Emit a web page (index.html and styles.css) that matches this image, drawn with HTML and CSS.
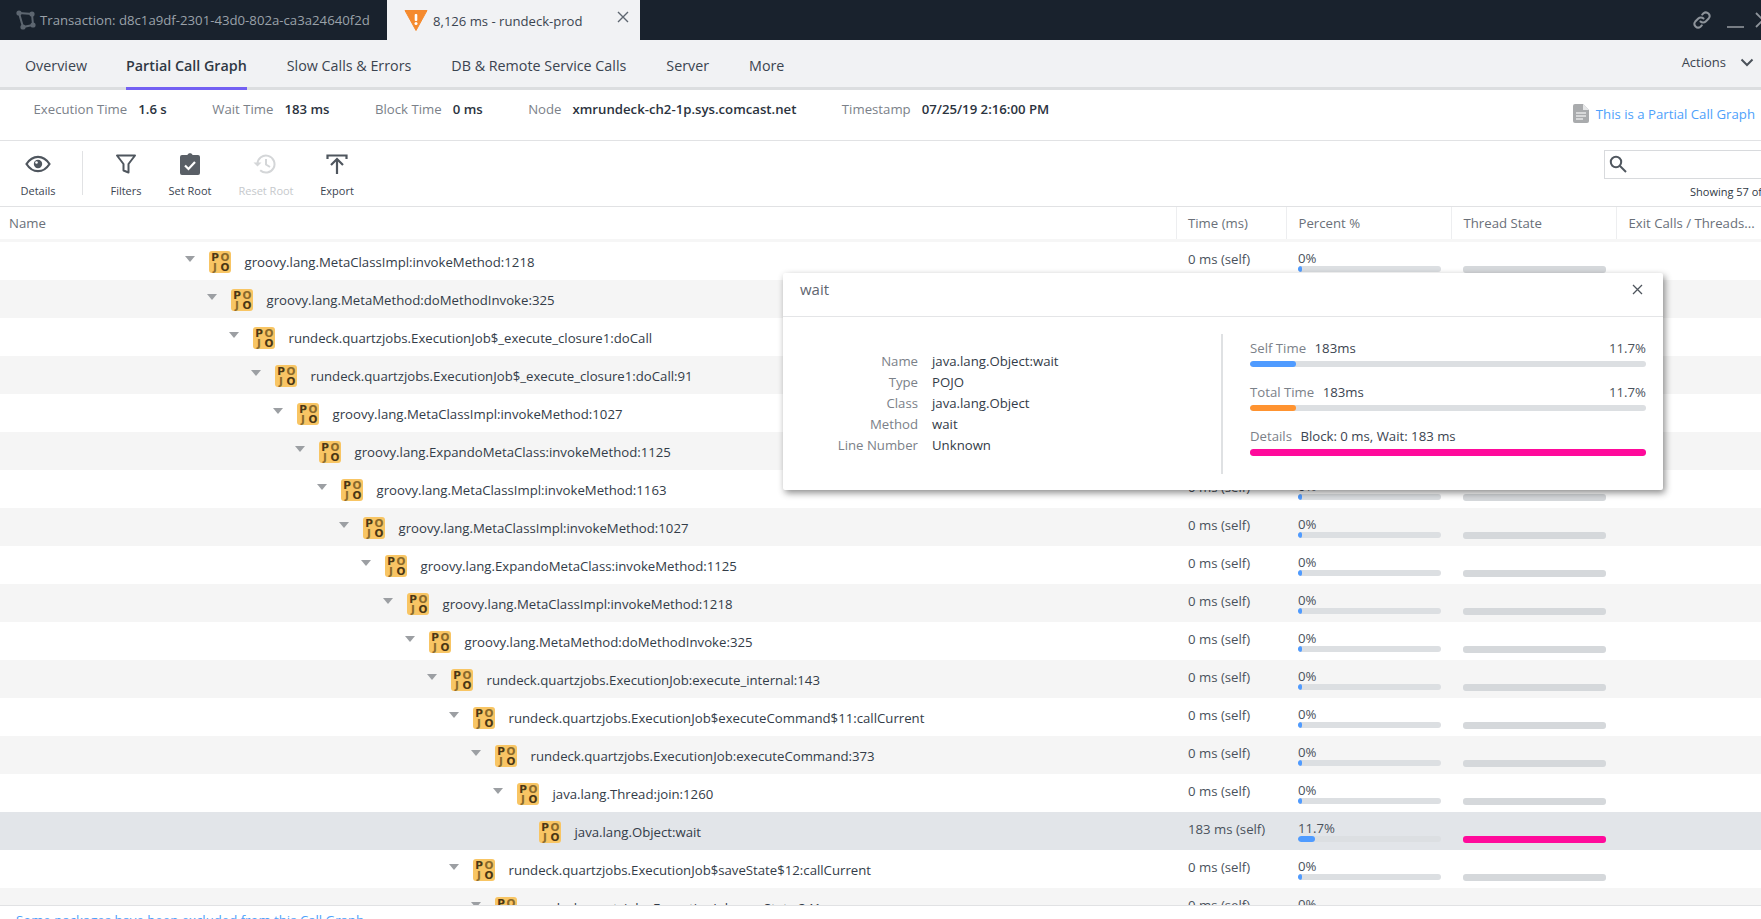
FILE: index.html
```html
<!DOCTYPE html>
<html lang="en">
<head>
<meta charset="utf-8">
<title>Partial Call Graph</title>
<link rel="stylesheet" href="styles.css">
</head>
<body>
<div class="page">
  <header class="tabbar">
    <div class="wintab">
      <svg class="tab-ico" width="20" height="20" viewBox="0 0 20 20"><path d="M3 3 16 4 17 15 7 17Z" fill="none" stroke="#5d6670" stroke-width="2"/><circle cx="3" cy="3" r="2.6" fill="#5d6670"/><circle cx="16" cy="4" r="2.6" fill="#5d6670"/><circle cx="17" cy="15" r="2.6" fill="#5d6670"/><circle cx="7" cy="17" r="2.6" fill="#5d6670"/></svg>
      <span>Transaction: d8c1a9df-2301-43d0-802a-ca3a24640f2d</span>
    </div>
    <div class="wintab active">
      <svg class="warn-ico" width="24" height="22" viewBox="0 0 24 22"><path d="M1 1.5H23L12 21.5Z" fill="#f58a2e" stroke="#f58a2e" stroke-linejoin="round"/><rect x="10.7" y="5" width="2.6" height="7" rx="1" fill="#fff"/><circle cx="12" cy="14.6" r="1.5" fill="#fff"/></svg>
      <span class="active-label">8,126 ms - rundeck-prod</span>
      <svg class="tab-close" width="12" height="12" viewBox="0 0 12 12"><path d="M1 1 11 11M11 1 1 11" stroke="#5e6670" stroke-width="1.4" fill="none"/></svg>
    </div>
    <div class="win-actions">
      <svg class="win-link" width="20" height="20" viewBox="0 0 20 20" fill="none" stroke="#8e949b" stroke-width="2" stroke-linecap="round"><path d="M8.5 11.5a3.6 3.6 0 0 0 5.2 0l3-3a3.7 3.7 0 0 0-5.2-5.2l-1.3 1.3"/><path d="M11.500 8.500a3.600 3.600 0 0 0-5.200 0l-3 3a3.700 3.700 0 0 0 5.200 5.200l1.300-1.300"/></svg>
      <span class="win-min"></span>
      <svg class="win-x" width="16" height="16" viewBox="0 0 16 16"><path d="M1 1 15 15M15 1 1 15" stroke="#8e949b" stroke-width="1.800" fill="none"/></svg>
    </div>
  </header>

  <nav class="nav">
    <a class="nav-item">Overview</a>
    <a class="nav-item current">Partial Call Graph</a>
    <a class="nav-item">Slow Calls &amp; Errors</a>
    <a class="nav-item">DB &amp; Remote Service Calls</a>
    <a class="nav-item">Server</a>
    <a class="nav-item">More</a>
    <div class="nav-actions">
      <span>Actions</span>
      <svg width="14" height="9" viewBox="0 0 14 9"><path d="M1.500 1.500 7 7l5.500-5.500" stroke="#4b525a" stroke-width="2" fill="none"/></svg>
    </div>
  </nav>

  <section class="info">
    <div class="pair"><span class="lbl">Execution Time</span><span class="val">1.6 s</span></div>
    <div class="pair"><span class="lbl">Wait Time</span><span class="val">183 ms</span></div>
    <div class="pair"><span class="lbl">Block Time</span><span class="val">0 ms</span></div>
    <div class="pair"><span class="lbl">Node</span><span class="val">xmrundeck-ch2-1p.sys.comcast.net</span></div>
    <div class="pair"><span class="lbl">Timestamp</span><span class="val">07/25/19 2:16:00 PM</span></div>
    <a class="partial">
      <svg width="16" height="19" viewBox="0 0 16 19"><path d="M2 0H10L16 6V17a2 2 0 0 1-2 2H2a2 2 0 0 1-2-2V2a2 2 0 0 1 2-2Z" fill="#a9abad"/><path d="M10 0V6H16Z" fill="#e6e7e8"/><path d="M3 9H13M3 12H13M3 15H10" stroke="#e6e7e8" stroke-width="1.400"/></svg>
      <span>This is a Partial Call Graph</span>
    </a>
  </section>

  <section class="toolbar">
    <div class="tool t-details">
      <svg width="26" height="20" viewBox="0 0 26 20" fill="none"><path d="M1.500 10C5 4.500 9 2.800 13 2.800S21 4.500 24.500 10C21 15.500 17 17.200 13 17.200S5 15.500 1.500 10Z" stroke="#4f565e" stroke-width="2.200"/><circle cx="13" cy="10" r="4.200" fill="#4f565e"/><circle cx="11.500" cy="8.500" r="1.300" fill="#fff"/></svg>
      <span>Details</span>
    </div>
    <span class="tool-sep"></span>
    <div class="tool t-filters">
      <svg width="22" height="22" viewBox="0 0 22 22" fill="none"><path d="M2 2.500H20L13.500 11V19.500L8.500 17.500V11Z" stroke="#4f565e" stroke-width="2" stroke-linejoin="round"/></svg>
      <span>Filters</span>
    </div>
    <div class="tool t-root">
      <svg width="20" height="24" viewBox="0 0 20 24"><path d="M2 3H7.500C7.800 .5 12.200 .5 12.500 3H18a2 2 0 0 1 2 2V21a2 2 0 0 1-2 2H2a2 2 0 0 1-2-2V5a2 2 0 0 1 2-2Z" fill="#595f66"/><path d="M5 13.500 8.500 17 15 10" stroke="#fff" stroke-width="2.200" fill="none"/></svg>
      <span>Set Root</span>
    </div>
    <div class="tool t-reset disabled">
      <svg width="24" height="22" viewBox="0 0 24 22" fill="none" stroke="#d4d6d8" stroke-width="2"><path d="M5.500 11a8.500 8.500 0 1 1 2.700 6.300"/><path d="M1.500 9.500 5.500 13.500 9.500 9.500Z" fill="#d4d6d8" stroke="none"/><path d="M14 6V11.500L18 14"/></svg>
      <span>Reset Root</span>
    </div>
    <div class="tool t-export">
      <svg width="22" height="22" viewBox="0 0 22 22" fill="none" stroke="#4f565e" stroke-width="2.200"><path d="M1.500 6V2.500H20.500V6"/><path d="M11 21V7M5 12 11 6 17 12"/></svg>
      <span>Export</span>
    </div>
    <div class="search-box">
      <div class="search">
        <svg width="18" height="18" viewBox="0 0 18 18" fill="none" stroke="#50575f" stroke-width="2"><circle cx="7" cy="7" r="5.200"/><path d="M11 11 17 17"/></svg>
      </div>
      <div class="showing">Showing 57 of 57</div>
    </div>
  </section>

  <div class="thead">
    <div class="th">Name</div>
    <div class="th">Time (ms)</div>
    <div class="th">Percent %</div>
    <div class="th">Thread State</div>
    <div class="th">Exit Calls / Threads...</div>
  </div>

  <main class="tbody">
    <div class="row" style="--d:0"><div class="c-name"><i class="tri"></i><span class="pojo"><b>P</b><u>O</u><u>J</u><b>O</b></span><span>groovy.lang.MetaClassImpl:invokeMethod:1218</span></div><div class="c-time">0 ms (self)</div><div class="c-pct">0%<div class="bar"><div class="fill min"></div></div></div><div class="c-state"><div class="tbar"></div></div></div>
    <div class="row" style="--d:1"><div class="c-name"><i class="tri"></i><span class="pojo"><b>P</b><u>O</u><u>J</u><b>O</b></span><span>groovy.lang.MetaMethod:doMethodInvoke:325</span></div><div class="c-time">0 ms (self)</div><div class="c-pct">0%<div class="bar"><div class="fill min"></div></div></div><div class="c-state"><div class="tbar"></div></div></div>
    <div class="row" style="--d:2"><div class="c-name"><i class="tri"></i><span class="pojo"><b>P</b><u>O</u><u>J</u><b>O</b></span><span>rundeck.quartzjobs.ExecutionJob$_execute_closure1:doCall</span></div><div class="c-time">0 ms (self)</div><div class="c-pct">0%<div class="bar"><div class="fill min"></div></div></div><div class="c-state"><div class="tbar"></div></div></div>
    <div class="row" style="--d:3"><div class="c-name"><i class="tri"></i><span class="pojo"><b>P</b><u>O</u><u>J</u><b>O</b></span><span>rundeck.quartzjobs.ExecutionJob$_execute_closure1:doCall:91</span></div><div class="c-time">0 ms (self)</div><div class="c-pct">0%<div class="bar"><div class="fill min"></div></div></div><div class="c-state"><div class="tbar"></div></div></div>
    <div class="row" style="--d:4"><div class="c-name"><i class="tri"></i><span class="pojo"><b>P</b><u>O</u><u>J</u><b>O</b></span><span>groovy.lang.MetaClassImpl:invokeMethod:1027</span></div><div class="c-time">0 ms (self)</div><div class="c-pct">0%<div class="bar"><div class="fill min"></div></div></div><div class="c-state"><div class="tbar"></div></div></div>
    <div class="row" style="--d:5"><div class="c-name"><i class="tri"></i><span class="pojo"><b>P</b><u>O</u><u>J</u><b>O</b></span><span>groovy.lang.ExpandoMetaClass:invokeMethod:1125</span></div><div class="c-time">0 ms (self)</div><div class="c-pct">0%<div class="bar"><div class="fill min"></div></div></div><div class="c-state"><div class="tbar"></div></div></div>
    <div class="row" style="--d:6"><div class="c-name"><i class="tri"></i><span class="pojo"><b>P</b><u>O</u><u>J</u><b>O</b></span><span>groovy.lang.MetaClassImpl:invokeMethod:1163</span></div><div class="c-time">0 ms (self)</div><div class="c-pct">0%<div class="bar"><div class="fill min"></div></div></div><div class="c-state"><div class="tbar"></div></div></div>
    <div class="row" style="--d:7"><div class="c-name"><i class="tri"></i><span class="pojo"><b>P</b><u>O</u><u>J</u><b>O</b></span><span>groovy.lang.MetaClassImpl:invokeMethod:1027</span></div><div class="c-time">0 ms (self)</div><div class="c-pct">0%<div class="bar"><div class="fill min"></div></div></div><div class="c-state"><div class="tbar"></div></div></div>
    <div class="row" style="--d:8"><div class="c-name"><i class="tri"></i><span class="pojo"><b>P</b><u>O</u><u>J</u><b>O</b></span><span>groovy.lang.ExpandoMetaClass:invokeMethod:1125</span></div><div class="c-time">0 ms (self)</div><div class="c-pct">0%<div class="bar"><div class="fill min"></div></div></div><div class="c-state"><div class="tbar"></div></div></div>
    <div class="row" style="--d:9"><div class="c-name"><i class="tri"></i><span class="pojo"><b>P</b><u>O</u><u>J</u><b>O</b></span><span>groovy.lang.MetaClassImpl:invokeMethod:1218</span></div><div class="c-time">0 ms (self)</div><div class="c-pct">0%<div class="bar"><div class="fill min"></div></div></div><div class="c-state"><div class="tbar"></div></div></div>
    <div class="row" style="--d:10"><div class="c-name"><i class="tri"></i><span class="pojo"><b>P</b><u>O</u><u>J</u><b>O</b></span><span>groovy.lang.MetaMethod:doMethodInvoke:325</span></div><div class="c-time">0 ms (self)</div><div class="c-pct">0%<div class="bar"><div class="fill min"></div></div></div><div class="c-state"><div class="tbar"></div></div></div>
    <div class="row" style="--d:11"><div class="c-name"><i class="tri"></i><span class="pojo"><b>P</b><u>O</u><u>J</u><b>O</b></span><span>rundeck.quartzjobs.ExecutionJob:execute_internal:143</span></div><div class="c-time">0 ms (self)</div><div class="c-pct">0%<div class="bar"><div class="fill min"></div></div></div><div class="c-state"><div class="tbar"></div></div></div>
    <div class="row" style="--d:12"><div class="c-name"><i class="tri"></i><span class="pojo"><b>P</b><u>O</u><u>J</u><b>O</b></span><span>rundeck.quartzjobs.ExecutionJob$executeCommand$11:callCurrent</span></div><div class="c-time">0 ms (self)</div><div class="c-pct">0%<div class="bar"><div class="fill min"></div></div></div><div class="c-state"><div class="tbar"></div></div></div>
    <div class="row" style="--d:13"><div class="c-name"><i class="tri"></i><span class="pojo"><b>P</b><u>O</u><u>J</u><b>O</b></span><span>rundeck.quartzjobs.ExecutionJob:executeCommand:373</span></div><div class="c-time">0 ms (self)</div><div class="c-pct">0%<div class="bar"><div class="fill min"></div></div></div><div class="c-state"><div class="tbar"></div></div></div>
    <div class="row" style="--d:14"><div class="c-name"><i class="tri"></i><span class="pojo"><b>P</b><u>O</u><u>J</u><b>O</b></span><span>java.lang.Thread:join:1260</span></div><div class="c-time">0 ms (self)</div><div class="c-pct">0%<div class="bar"><div class="fill min"></div></div></div><div class="c-state"><div class="tbar"></div></div></div>
    <div class="row selected" style="--d:15"><div class="c-name"><i class="tri none"></i><span class="pojo"><b>P</b><u>O</u><u>J</u><b>O</b></span><span>java.lang.Object:wait</span></div><div class="c-time">183 ms (self)</div><div class="c-pct">11.7%<div class="bar"><div class="fill" style="width:11.7%"></div></div></div><div class="c-state"><div class="tbar pink"></div></div></div>
    <div class="row" style="--d:12"><div class="c-name"><i class="tri"></i><span class="pojo"><b>P</b><u>O</u><u>J</u><b>O</b></span><span>rundeck.quartzjobs.ExecutionJob$saveState$12:callCurrent</span></div><div class="c-time">0 ms (self)</div><div class="c-pct">0%<div class="bar"><div class="fill min"></div></div></div><div class="c-state"><div class="tbar"></div></div></div>
    <div class="row" style="--d:13"><div class="c-name"><i class="tri"></i><span class="pojo"><b>P</b><u>O</u><u>J</u><b>O</b></span><span>rundeck.quartzjobs.ExecutionJob:saveState:341</span></div><div class="c-time">0 ms (self)</div><div class="c-pct">0%<div class="bar"><div class="fill min"></div></div></div><div class="c-state"><div class="tbar"></div></div></div>
  </main>

  <footer class="foot"><a>Some packages have been excluded from this Call Graph</a></footer>

  <aside class="modal">
    <div class="modal-head">
      <span>wait</span>
      <svg width="11" height="11" viewBox="0 0 11 11"><path d="M1 1 10 10M10 1 1 10" stroke="#4e555d" stroke-width="1.300" fill="none"/></svg>
    </div>
    <div class="modal-body">
      <dl class="props">
        <dt>Name</dt><dd>java.lang.Object:wait</dd>
        <dt>Type</dt><dd>POJO</dd>
        <dt>Class</dt><dd>java.lang.Object</dd>
        <dt>Method</dt><dd>wait</dd>
        <dt>Line Number</dt><dd>Unknown</dd>
      </dl>
      <div class="stats">
        <div class="stat">
          <div class="stat-line"><span class="lbl">Self Time</span><span class="sv">183ms</span><span class="pc">11.7%</span></div>
          <div class="mbar"><div class="mfill blue" style="width:11.7%"></div></div>
        </div>
        <div class="stat">
          <div class="stat-line"><span class="lbl">Total Time</span><span class="sv">183ms</span><span class="pc">11.7%</span></div>
          <div class="mbar"><div class="mfill orange" style="width:11.7%"></div></div>
        </div>
        <div class="stat">
          <div class="stat-line"><span class="lbl">Details</span><span class="sv">Block: 0 ms, Wait: 183 ms</span></div>
          <div class="mbar thick"><div class="mfill pinkfill" style="width:100%"></div></div>
        </div>
      </div>
    </div>
  </aside>
</div>
</body>
</html>
```

FILE: styles.css
```css
* { box-sizing: border-box; }
html, body { margin: 0; padding: 0; height: 100%; overflow: hidden; background: #fff; }
body { font-family: "Open Sans", "Liberation Sans", sans-serif; font-size: 13.2px; color: #333c48; }
.page { position: relative; width: 1761px; height: 919px; overflow: hidden; display: flex; flex-direction: column; }

/* window tabs */
.tabbar { flex: 0 0 40px; background: #19222d; display: flex; align-items: stretch; color: #9aa1a9; }
.wintab { display: flex; align-items: center; }
.wintab:first-child { width: 387px; padding-left: 16px; gap: 4px; padding-bottom: 1px; }
.wintab.active { width: 253px; background: #f1f2f4; color: #3b4450; padding-left: 17px; font-size: 13.1px; }
.warn-ico { flex: none; margin-right: 5px; }
.active-label { position: relative; top: 1px; }
.tab-close { margin-left: auto; margin-right: 11px; margin-top: -6px; }
.win-actions { margin-left: auto; display: flex; align-items: center; margin-right: -10px; }
.win-link { margin-right: -1px; }
.win-min { display: block; width: 17px; height: 2px; background: #777d84; margin: 14px 11px 0 16px; }

/* section nav */
.nav { flex: 0 0 50px; min-height: 0; background: #f1f2f4; border-bottom: 3px solid #dcdee0; display: flex; gap: 40px; padding-left: 25px; font-size: 14.3px; color: #3b4450; align-items: flex-start; }
.nav-item { display: flex; align-items: center; height: 50px; padding-top: 4px; border-bottom: 3px solid transparent; }
.nav-item:first-child { margin-right: -1px; }
.nav-item.current { border-bottom-color: #7360f2; color: #2f3844; font-weight: 600; }
.nav-actions { margin-left: auto; display: flex; align-items: center; gap: 14px; padding-right: 7px; height: 44px; font-size: 13px; }

/* info strip */
.info { flex: 0 0 51px; border-bottom: 1px solid #e1e2e4; display: flex; align-items: flex-start; gap: 45.5px; padding: 9px 6px 0 33.5px; }
.pair { display: flex; gap: 11px; line-height: 20px; }
.lbl { color: #7b8189; }
.val { color: #2b333e; font-weight: 600; }
.partial { margin-left: auto; display: flex; align-items: center; gap: 7px; color: #4ea1fb; margin-top: 5px; }

/* toolbar */
.toolbar { flex: 0 0 66px; border-bottom: 1px solid #e1e2e4; display: flex; align-items: flex-start; }
.tool { display: grid; grid-template-rows: 24px 15px; row-gap: 7px; justify-items: center; align-items: center; width: 70px; padding-top: 11px; font-size: 11px; line-height: 15px; color: #3b4450; }
.tool span { white-space: nowrap; }
.tool.disabled { color: #c6c9cc; }
.t-details { margin-left: 3px; }
.tool-sep { width: 1px; height: 44px; margin: 10px 0 0 9px; background: #e1e2e4; }
.t-filters { margin-left: 8px; }
.t-root { margin-left: -6px; }
.t-reset { margin-left: 6px; }
.t-reset svg { margin-left: -4px; }
.t-export { margin-left: 1px; }
.search-box { margin-left: auto; margin-right: -43px; width: 200px; padding-top: 9px; }
.search { height: 29px; border: 1px solid #d8dadd; padding: 4px 4px; }
.showing { font-size: 11px; line-height: 15px; margin-top: 5px; padding-left: 86px; white-space: nowrap; color: #2f3844; }

/* table */
.thead { flex: 0 0 35px; display: grid; grid-template-columns: 1176px 110px 165px 165px 1fr; border-bottom: 3px solid #f6f6f6; color: #6a7079; }
.th { padding: 6px 11px 0; line-height: 20px; border-left: 1px solid #edeef0; white-space: nowrap; }
.th:first-child { border-left: 0; padding-left: 9px; }
.th:nth-child(n+3) { padding-left: 11.5px; }
.tbody { flex: 1 1 0; min-height: 0; overflow: hidden; }
.row { height: 38px; display: grid; grid-template-columns: 1176px 110px 165px 165px 1fr; }
.row:nth-child(even) { background: #f5f5f5; }
.row.selected { background: #e2e5e9; }
.c-name { display: flex; align-items: center; padding-top: 2px; padding-left: calc(185px + 22px * var(--d)); white-space: nowrap; color: #333c48; }
.tri { flex: none; width: 0; height: 0; border-left: 5px solid transparent; border-right: 5px solid transparent; border-top: 6px solid #9c9fa3; margin: -6px 14px 0 0; }
.tri.none { border-top-color: transparent; }
.pojo { flex: none; width: 22px; height: 22px; margin-right: 13.5px; background: #f8c564; border-radius: 3px; display: grid; grid-template-columns: 10px 10px; grid-auto-rows: 10px; align-content: center; justify-content: center; justify-items: center; font: 700 10.5px/10px "DejaVu Sans", sans-serif; }
.pojo b { color: #4a3715; font-weight: 700; }
.pojo u { color: #8a6a2c; text-decoration: none; }
.c-time { padding: 8px 12px 0; line-height: 18px; color: #4a525c; white-space: nowrap; }
.c-pct { padding: 8px 10px 0 12px; line-height: 16px; color: #4a525c; }
.c-state { padding: 24px 10px 0 12px; }
.bar { height: 6px; background: #dcdfe2; border-radius: 3px; overflow: hidden; }
.fill { height: 100%; background: #4f9bff; border-radius: 3px; }
.fill.min { width: 4px; }
.tbar { height: 7px; background: #d5d8db; border-radius: 3px; }
.tbar.pink { background: #ff0a9b; }

.foot { flex: 0 0 14px; border-top: 1px solid #e1e2e4; padding: 5px 0 0 16px; line-height: 18px; color: #4ea1fb; overflow: hidden; white-space: nowrap; }

/* popup */
.modal { position: absolute; left: 783px; top: 273px; width: 880px; height: 217px; background: #fff; border-radius: 2px; box-shadow: 2px 3px 7px rgba(0, 0, 0, .45); }
.modal-head { height: 44px; border-bottom: 1px solid #e4e5e7; display: flex; align-items: center; justify-content: space-between; padding: 0 20px 0 17px; font-size: 15px; color: #5f6670; }
.modal-head span { position: relative; top: -6px; }
.modal-head svg { position: relative; top: -5px; }
.modal-body { display: flex; padding-top: 17px; }
.props { width: 438px; margin: 0; display: grid; grid-template-columns: 135px 1fr; grid-auto-rows: 21px; column-gap: 14px; align-content: start; padding-top: 17px; line-height: 21px; }
.props dt { text-align: right; color: #7b8189; }
.props dd { margin: 0; color: #333c48; }
.stats { width: 442px; height: 140px; border-left: 2px solid #dfe1e3; padding: 5px 17px 0 27px; }
.stat { height: 44px; }
.stat-line { display: flex; line-height: 18px; gap: 8.5px; }
.pc { margin-left: auto; color: #4a525c; }
.sv { color: #3b4450; }
.mbar { height: 6px; margin-top: 4px; background: #dcdfe2; border-radius: 3px; overflow: hidden; }
.mbar.thick { height: 7px; margin-top: 4px; }
.mfill { height: 100%; border-radius: 3px; }
.blue { background: #4f9bff; }
.orange { background: #ff9330; }
.pinkfill { background: #ff0a9b; }
```
